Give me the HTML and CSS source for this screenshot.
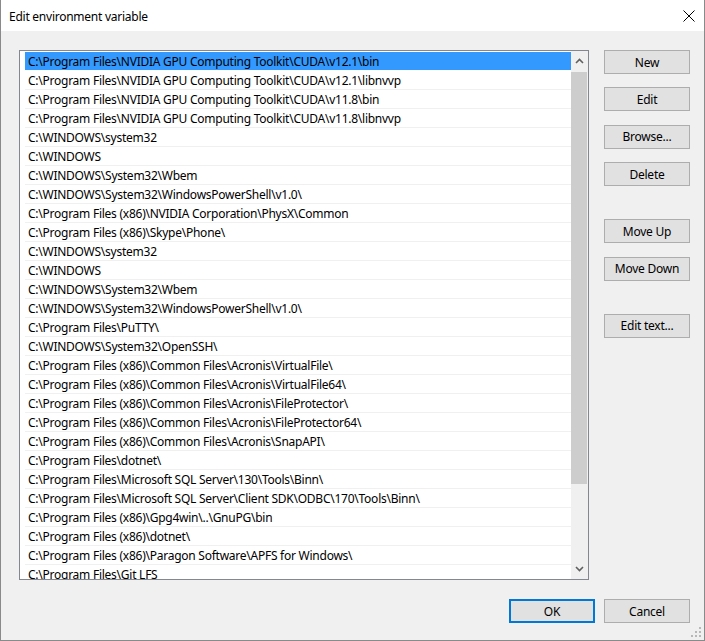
FILE: index.html
```html
<!DOCTYPE html>
<html lang="en">
<head>
  <meta charset="UTF-8" />
  <title>Edit environment variable</title>
  <link rel="stylesheet" href="styles.css">
</head>
<body>
  <div class="window">
    <div class="titlebar">
      <span class="title">Edit environment variable</span>
      <svg class="close" width="12" height="12" viewBox="0 0 12 12">
        <path d="M0.5 0.5 L11.5 11.5 M11.5 0.5 L0.5 11.5" stroke="#000" stroke-width="1" fill="none"/>
      </svg>
    </div>

    <div class="content">
      <div class="main">
        <div class="listbox">
          <ul class="items">
            <li class="selected">C:\Program Files\NVIDIA GPU Computing Toolkit\CUDA\v12.1\bin</li>
            <li>C:\Program Files\NVIDIA GPU Computing Toolkit\CUDA\v12.1\libnvvp</li>
            <li>C:\Program Files\NVIDIA GPU Computing Toolkit\CUDA\v11.8\bin</li>
            <li>C:\Program Files\NVIDIA GPU Computing Toolkit\CUDA\v11.8\libnvvp</li>
            <li>C:\WINDOWS\system32</li>
            <li>C:\WINDOWS</li>
            <li>C:\WINDOWS\System32\Wbem</li>
            <li>C:\WINDOWS\System32\WindowsPowerShell\v1.0\</li>
            <li>C:\Program Files (x86)\NVIDIA Corporation\PhysX\Common</li>
            <li>C:\Program Files (x86)\Skype\Phone\</li>
            <li>C:\WINDOWS\system32</li>
            <li>C:\WINDOWS</li>
            <li>C:\WINDOWS\System32\Wbem</li>
            <li>C:\WINDOWS\System32\WindowsPowerShell\v1.0\</li>
            <li>C:\Program Files\PuTTY\</li>
            <li>C:\WINDOWS\System32\OpenSSH\</li>
            <li>C:\Program Files (x86)\Common Files\Acronis\VirtualFile\</li>
            <li>C:\Program Files (x86)\Common Files\Acronis\VirtualFile64\</li>
            <li>C:\Program Files (x86)\Common Files\Acronis\FileProtector\</li>
            <li>C:\Program Files (x86)\Common Files\Acronis\FileProtector64\</li>
            <li>C:\Program Files (x86)\Common Files\Acronis\SnapAPI\</li>
            <li>C:\Program Files\dotnet\</li>
            <li>C:\Program Files\Microsoft SQL Server\130\Tools\Binn\</li>
            <li>C:\Program Files\Microsoft SQL Server\Client SDK\ODBC\170\Tools\Binn\</li>
            <li>C:\Program Files (x86)\Gpg4win\..\GnuPG\bin</li>
            <li>C:\Program Files (x86)\dotnet\</li>
            <li>C:\Program Files (x86)\Paragon Software\APFS for Windows\</li>
            <li>C:\Program Files\Git LFS</li>
          </ul>
          <div class="scrollbar">
            <div class="arrow">
              <svg width="9" height="6" viewBox="0 0 9 6"><path d="M1 5 L4.5 1.5 L8 5" stroke="#606060" stroke-width="1.6" fill="none"/></svg>
            </div>
            <div class="track"><div class="thumb"></div></div>
            <div class="arrow">
              <svg width="9" height="6" viewBox="0 0 9 6"><path d="M1 1 L4.5 4.5 L8 1" stroke="#606060" stroke-width="1.6" fill="none"/></svg>
            </div>
          </div>
        </div>

        <div class="side">
          <div class="group">
            <button class="btn">New</button>
            <button class="btn">Edit</button>
            <button class="btn">Browse...</button>
            <button class="btn">Delete</button>
          </div>
          <div class="group">
            <button class="btn">Move Up</button>
            <button class="btn">Move Down</button>
          </div>
          <div class="group">
            <button class="btn">Edit text...</button>
          </div>
        </div>
      </div>

      <div class="footer">
        <button class="btn default">OK</button>
        <button class="btn">Cancel</button>
      </div>
    </div>

    <svg class="grip" width="10" height="10" viewBox="0 0 10 10">
      <rect x="8" y="0" width="2" height="2" fill="#b8b8b8"/>
      <rect x="4" y="4" width="2" height="2" fill="#b8b8b8"/>
      <rect x="8" y="4" width="2" height="2" fill="#b8b8b8"/>
      <rect x="0" y="8" width="2" height="2" fill="#b8b8b8"/>
      <rect x="4" y="8" width="2" height="2" fill="#b8b8b8"/>
      <rect x="8" y="8" width="2" height="2" fill="#b8b8b8"/>
    </svg>
  </div>
</body>
</html>
```

FILE: styles.css
```css
* {
  box-sizing: border-box;
}
body {
  margin: 0;
  padding: 0;
  background: #fff;
  font-family: 'Noto Sans', 'Open Sans', sans-serif;
  font-size: 12px;
  letter-spacing: -0.25px;
  color: #000;
}
.window {
  width: 705px;
  height: 641px;
  border: 1px solid #8a8a8a;
  border-top: none;
  background: #f0f0f0;
  position: relative;
  display: flex;
  flex-direction: column;
}
.titlebar {
  height: 31px;
  background: #fff;
  display: flex;
  align-items: center;
  justify-content: space-between;
  padding: 1px 9px 0 8px;
}
.title {
  font-size: 12px;
}
.content {
  padding: 19px 14px 0 18px;
}
.main {
  display: flex;
  gap: 15px;
}
.listbox {
  width: 570px;
  height: 530px;
  border: 1px solid #828790;
  background: #fff;
  display: flex;
  overflow: hidden;
}
.items {
  list-style: none;
  margin: 0;
  padding: 1px 0 0 5px;
  flex: 1;
  overflow: hidden;
}
.items li {
  height: 19px;
  line-height: 20px;
  padding-left: 3px;
  border-bottom: 1px solid #f0f0f0;
  white-space: nowrap;
}
.items li.selected {
  background: #3399ff;
  border-bottom-color: #fff;
}
.scrollbar {
  width: 17px;
  background: #f0f0f0;
  display: flex;
  flex-direction: column;
}
.arrow {
  height: 20px;
  display: flex;
  align-items: center;
  justify-content: center;
}
.track {
  flex: 1;
}
.thumb {
  height: 412px;
  margin: 1px 1px 0 0;
  background: #cdcdcd;
}
.side {
  display: flex;
  flex-direction: column;
  gap: 33px;
}
.group {
  display: flex;
  flex-direction: column;
  gap: 13.4px;
}
.btn {
  width: 86px;
  height: 24px;
  border: 1px solid #adadad;
  background: #e1e1e1;
  font-family: inherit;
  font-size: 12px;
  letter-spacing: -0.25px;
  color: #000;
  padding: 0;
}
.footer {
  display: flex;
  justify-content: flex-end;
  gap: 9px;
  margin-top: 19px;
}
.btn.default {
  border: 2px solid #0078d7;
}
.grip {
  position: absolute;
  right: 3px;
  bottom: 3px;
}
```
